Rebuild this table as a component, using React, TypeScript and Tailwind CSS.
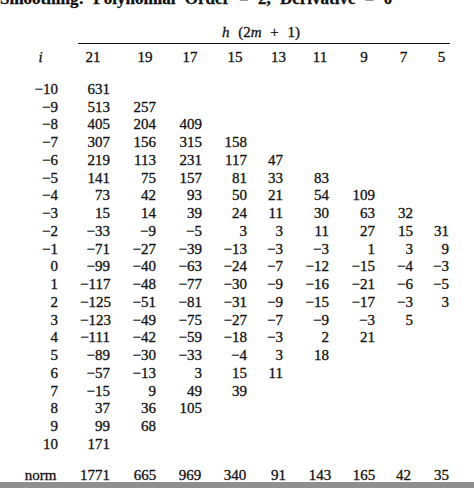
import React from 'react';

// columns of the smoothing table: window width h, half-width m, values for i = -m..m
const columns = [
  { h: 21, vals: [631, 513, 405, 307, 219, 141, 73, 15, -33, -71, -99, -117, -125, -123, -111, -89, -57, -15, 37, 99, 171], norm: 1771 },
  { h: 19, vals: [257, 204, 156, 113, 75, 42, 14, -9, -27, -40, -48, -51, -49, -42, -30, -13, 9, 36, 68], norm: 665 },
  { h: 17, vals: [409, 315, 231, 157, 93, 39, -5, -39, -63, -77, -81, -75, -59, -33, 3, 49, 105], norm: 969 },
  { h: 15, vals: [158, 117, 81, 50, 24, 3, -13, -24, -30, -31, -27, -18, -4, 15, 39], norm: 340 },
  { h: 13, vals: [47, 33, 21, 11, 3, -3, -7, -9, -9, -7, -3, 3, 11], norm: 91 },
  { h: 11, vals: [83, 54, 30, 11, -3, -12, -16, -15, -9, 2, 18], norm: 143 },
  { h: 9, vals: [109, 63, 27, 1, -15, -21, -17, -3, 21], norm: 165 },
  { h: 7, vals: [32, 15, 3, -4, -6, -3, 5], norm: 42 },
  { h: 5, vals: [31, 9, -3, -5, 3], norm: 35 },
];

// cell padding, first entry is the i column
const dataPad = ['pr-[22px]', 'pr-[14px]', 'pr-[12px]', 'pr-[11px]', 'pr-[10px]', 'pr-[13px]', 'pr-[11px]', 'pr-[9px]', 'pr-[9px]', 'pr-[25px]'];
const centerPad = ['pl-[1px]', 'pr-[18px]', 'pr-[2px]', 'pr-[1px]', '', 'pl-[4px]', 'pl-[4px]', 'pl-[4px]', 'pl-[1px]', 'pr-[13px]'];

const gridCols = 'grid grid-cols-[80px_44px_44px_45px_44px_39px_44px_44px_38px_52px]';

const fmt = (n: number) => (n < 0 ? '\u2212' + Math.abs(n) : String(n));

const rows = Array.from({ length: 21 }, (_, k) => k - 10);

const App = () => {
  return (
    <div
      className="w-[474px] h-[488px] bg-white text-[#111] flex flex-col overflow-hidden [-webkit-text-stroke:0.3px_#111]"
      style={{ fontFamily: '"Liberation Serif", "Times New Roman", serif' }}
    >
      <div className="h-[7px]">
        <p className="-mt-[10px] text-[17px] leading-[17px] font-bold whitespace-nowrap [word-spacing:5px]">
          Smoothing: Polynomial Order = 2, Derivative = 0
        </p>
      </div>

      <div className="mt-[16px] h-[18px] leading-[18px] text-[15px] pl-[222px] whitespace-nowrap [word-spacing:5px]">
        <i>h</i> (2<i>m</i> + 1)
      </div>
      <div className="mt-[1.5px] ml-[78px] w-[372px] h-[1.5px] bg-[#111]" />

      <div className={`${gridCols} mt-[5px] text-[15px] leading-[17.75px]`}>
        <div className={`text-center ${centerPad[0]}`}>
          <i>i</i>
        </div>
        {columns.map((c, k) => (
          <div key={c.h} className={`text-center ${centerPad[k + 1]}`}>
            {c.h}
          </div>
        ))}
      </div>

      <div className="mt-[14.2px] text-[15px] leading-[17.75px]">
        {rows.map(i => (
          <div key={i} className={gridCols}>
            <div className={`text-right ${dataPad[0]}`}>{fmt(i)}</div>
            {columns.map((c, k) => {
              const m = (c.h - 1) / 2;
              return (
                <div key={c.h} className={`text-right whitespace-nowrap ${dataPad[k + 1]}`}>
                  {Math.abs(i) <= m ? fmt(c.vals[i + m]) : ''}
                </div>
              );
            })}
          </div>
        ))}
      </div>

      <div className={`${gridCols} mt-[14px] text-[15px] leading-[14px]`}>
        <div className={`text-center ${centerPad[0]}`}>norm</div>
        {columns.map((c, k) => (
          <div key={c.h} className={`text-center ${centerPad[k + 1]}`}>
            {c.norm}
          </div>
        ))}
      </div>

      <div className="mt-auto h-[6px] bg-[#8f8f8f]" />
    </div>
  );
};

export default App;
